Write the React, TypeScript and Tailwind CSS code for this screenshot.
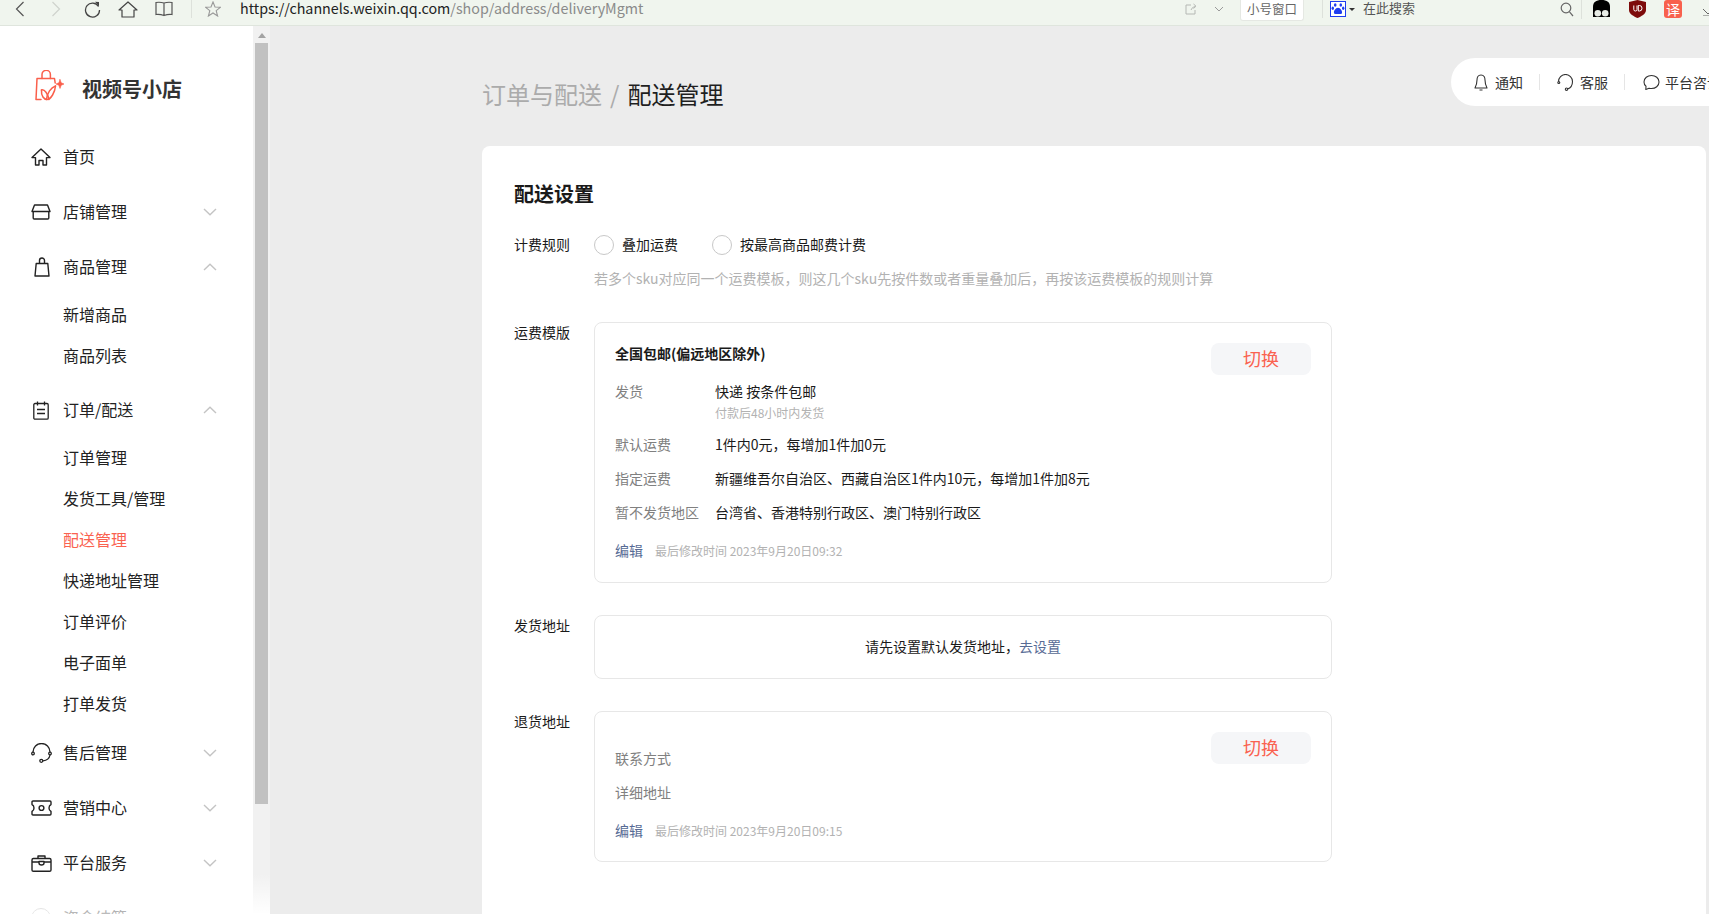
import React from "react";

const Back = ({ color = "#555" }: { color?: string }) => (
  <svg width="10" height="16" viewBox="0 0 10 16" fill="none" stroke={color} strokeWidth="1.2">
    <path d="M8.5 1 L1.5 8 L8.5 15" />
  </svg>
);

const Forward = () => (
  <svg width="10" height="16" viewBox="0 0 10 16" fill="none" stroke="#cfd3cd" strokeWidth="1.2">
    <path d="M1.5 1 L8.5 8 L1.5 15" />
  </svg>
);

const Chevron = ({ up }: { up?: boolean }) => (
  <svg width="14" height="8" viewBox="0 0 14 8" fill="none" stroke="#c4c4c4" strokeWidth="1.4">
    <path d={up ? "M1 7 L7 1.2 L13 7" : "M1 1 L7 6.8 L13 1"} />
  </svg>
);

const HomeIcon = () => (
  <svg width="20" height="18" viewBox="0 0 20 18" fill="none" stroke="#222" strokeWidth="1.4" strokeLinejoin="round">
    <path d="M10 1 L19 9.6 H15.5 V17 H12 V12.5 H8 V17 H4.5 V9.6 H1 Z" />
  </svg>
);

const StoreIcon = () => (
  <svg width="20" height="16" viewBox="0 0 20 16" fill="none" stroke="#222" strokeWidth="1.4" strokeLinejoin="round">
    <path d="M3.5 1 H16.5 L19 7.5 H1 Z" />
    <path d="M2.2 7.5 V14 Q2.2 15 3.2 15 H16.8 Q17.8 15 17.8 14 V7.5" />
  </svg>
);

const BagIcon = () => (
  <svg width="16" height="20" viewBox="0 0 16 20" fill="none" stroke="#222" strokeWidth="1.4" strokeLinejoin="round">
    <path d="M2.2 6.5 H13.8 L15 19 H1 Z" />
    <path d="M5.5 6.5 V3.5 a2.5 2.5 0 0 1 5 0 V6.5" />
  </svg>
);

const OrderIcon = () => (
  <svg width="16" height="19" viewBox="0 0 16 19" fill="none" stroke="#222" strokeWidth="1.3">
    <rect x="0.8" y="2.5" width="14.4" height="15.7" rx="1.2" />
    <path d="M4.5 0.5 V4.5 M11.5 0.5 V4.5 M4 8.5 H12 M4 12.5 H12" />
  </svg>
);

const HeadsetIcon = () => (
  <svg width="21" height="20" viewBox="0 0 21 20" fill="none" stroke="#222" strokeWidth="1.3">
    <path d="M2 9 a8.5 8.5 0 0 1 17 0" />
    <circle cx="2" cy="10.5" r="1.3" />
    <circle cx="19" cy="10.5" r="1.3" />
    <path d="M19 12 Q18 17.5 12 17.8" />
    <circle cx="10.3" cy="17.8" r="1.5" />
  </svg>
);

const TicketIcon = () => (
  <svg width="21" height="16" viewBox="0 0 21 16" fill="none" stroke="#222" strokeWidth="1.4" strokeLinejoin="round">
    <path d="M2 1 H19 Q20 1 20 2 V4.5 Q18 5.5 18 8 Q18 10.5 20 11.5 V14 Q20 15 19 15 H2 Q1 15 1 14 V11.5 Q3 10.5 3 8 Q3 5.5 1 4.5 V2 Q1 1 2 1 Z" />
    <circle cx="10.5" cy="8" r="2.4" />
  </svg>
);

const CaseIcon = () => (
  <svg width="21" height="17" viewBox="0 0 21 17" fill="none" stroke="#222" strokeWidth="1.4" strokeLinejoin="round">
    <rect x="1" y="3.5" width="19" height="12.8" rx="1.4" />
    <path d="M7 3.5 V1 H14 V3.5 M1 7 H8 M13 7 H20" />
    <path d="M8 6.5 H13 V8 Q13 10 10.5 10 Q8 10 8 8 Z" />
  </svg>
);

const Logo = () => (
  <svg width="31" height="31" viewBox="0 0 31 31" fill="none" stroke="#fa5f4b" strokeWidth="1.5" strokeLinejoin="round" strokeLinecap="round">
    <path d="M8 8.5 V4.5 a4.2 4.2 0 0 1 8.4 0 V8.5" />
    <path d="M3 8.5 H20.5 L21.2 13 M2 29.5 L3 8.5 M2 29.5 H7" />
    <path d="M7.5 20 C7 26 10 29.5 13 29.5 C17 29.5 21 22 21.5 16" />
    <path d="M7.5 20 C10.5 19 14 24 15 29.5" />
    <path d="M21.5 16 C17 17.5 13 23 12.5 29.5" />
    <path fill="#fa5f4b" d="M26 9.5 L27.2 12.8 L30 14 L27.2 15.2 L26 18.5 L24.8 15.2 L22 14 L24.8 12.8 Z" strokeWidth="0.6" />
  </svg>
);

function NavRow({ icon, label, arrow }: { icon: React.ReactNode; label: string; arrow?: "up" | "down" }) {
  return (
    <div className="flex h-[55px] items-center pl-[31px] text-[16px] text-[#222]">
      <div className="mt-[2px] flex w-[32px] items-center">{icon}</div>
      <span className="flex-1">{label}</span>
      {arrow && (
        <div className="mr-[36px] mt-[1px] flex">
          <Chevron up={arrow === "up"} />
        </div>
      )}
    </div>
  );
}

function SubRow({ label, active }: { label: string; active?: boolean }) {
  return (
    <div className={`flex h-[41px] items-center pl-[63px] text-[16px] ${active ? "text-[#fa6250]" : "text-[#222]"}`}>
      {label}
    </div>
  );
}

function Sidebar() {
  return (
    <aside className="relative h-full w-[253px] shrink-0 overflow-hidden bg-white">
      <div className="flex h-[102.5px] items-center gap-[17px] pl-[34px] pt-[23px]">
        <div className="-mt-[6px] flex">
          <Logo />
        </div>
        <span className="text-[20px] font-bold text-[#333]">视频号小店</span>
      </div>
      <NavRow icon={<HomeIcon />} label="首页" />
      <NavRow icon={<StoreIcon />} label="店铺管理" arrow="down" />
      <NavRow icon={<div className="ml-[3px] flex"><BagIcon /></div>} label="商品管理" arrow="up" />
      <div className="pb-[6px]">
        <SubRow label="新增商品" />
        <SubRow label="商品列表" />
      </div>
      <NavRow icon={<div className="ml-[2px] flex"><OrderIcon /></div>} label="订单/配送" arrow="up" />
      <div className="pb-[1px]">
        <SubRow label="订单管理" />
        <SubRow label="发货工具/管理" />
        <SubRow label="配送管理" active />
        <SubRow label="快递地址管理" />
        <SubRow label="订单评价" />
        <SubRow label="电子面单" />
        <SubRow label="打单发货" />
      </div>
      <NavRow icon={<HeadsetIcon />} label="售后管理" arrow="down" />
      <NavRow icon={<TicketIcon />} label="营销中心" arrow="down" />
      <NavRow icon={<CaseIcon />} label="平台服务" arrow="down" />
      <NavRow
        icon={<div className="h-[20px] w-[20px] rounded-full border border-[#bbb]" />}
        label="资金结算"
        arrow="down"
      />
      <div className="absolute inset-x-0 bottom-0 h-[40px] bg-gradient-to-b from-white/0 to-white/70" />
    </aside>
  );
}

function Scrollbar() {
  return (
    <div className="relative flex h-full w-[17px] shrink-0 flex-col items-center bg-[#f1f1f1]">
      <div className="mt-[7px] h-0 w-0 border-x-[4px] border-b-[5px] border-x-transparent border-b-[#a3a3a3]" />
      <div className="mt-[5px] h-[761px] w-[13px] bg-[#c1c1c1]" />
      <div className="absolute inset-x-0 bottom-0 h-[40px] bg-gradient-to-b from-white/0 to-white" />
    </div>
  );
}

function TopBar() {
  return (
    <header className="flex h-[26px] shrink-0 items-start justify-between overflow-hidden border-b border-[#dfe5dd] bg-[#f0f5ee]">
      <div className="flex h-[18px] items-center">
        <div className="ml-[15px] flex"><Back /></div>
        <div className="ml-[26px] flex"><Forward /></div>
        <svg className="ml-[23px]" width="17" height="17" viewBox="0 0 17 17" fill="none" stroke="#444" strokeWidth="1.3">
          <path d="M14.5 5.5 A7 7 0 1 0 15.5 9" />
          <path d="M11 0.8 L15 1 L15 5.6 Z" fill="#444" stroke="none" />
        </svg>
        <svg className="ml-[17px]" width="20" height="17" viewBox="0 0 20 17" fill="none" stroke="#444" strokeWidth="1.2">
          <path d="M10 1 L19 9 H16 V16 H4 V9 H1 Z" strokeLinejoin="round" />
        </svg>
        <svg className="ml-[17px]" width="18" height="16" viewBox="0 0 18 16" fill="none" stroke="#555" strokeWidth="1.2">
          <path d="M9 2 Q5 0.8 1 1.5 V13.5 Q5 13 9 14.5 Q13 13 17 13.5 V1.5 Q13 0.8 9 2 Z M9 2 V14.5" />
        </svg>
        <div className="ml-[18px] h-[18px] w-px bg-[#dde1db]" />
        <svg className="ml-[13px]" width="16" height="16" viewBox="0 0 16 16" fill="none" stroke="#999" strokeWidth="1.1">
          <path d="M8 1 L10 6 L15.3 6.3 L11.2 9.7 L12.6 15 L8 12 L3.4 15 L4.8 9.7 L0.7 6.3 L6 6 Z" />
        </svg>
        <div className="ml-[19px] whitespace-nowrap pb-[2px] text-[14.3px]">
          <span className="text-[#222]">https://channels.weixin.qq.com</span>
          <span className="text-[#8a8a8a]">/shop/address/deliveryMgmt</span>
        </div>
      </div>
      <div className="flex h-[18px] items-center">
        <svg width="12" height="12" viewBox="0 0 12 12" fill="none" stroke="#b5b8b4" strokeWidth="1">
          <path d="M6 2 H1 V11 H10 V7 M6 7 Q7 4 10 3.5 M8.5 1 L11 3.2 L8.5 5.5" />
        </svg>
        <svg className="ml-[17px]" width="10" height="6" viewBox="0 0 10 6" fill="none" stroke="#9a9a9a" strokeWidth="1">
          <path d="M1 1 L5 5 L9 1" />
        </svg>
        <div className="ml-[16px] flex h-[21px] w-[64px] items-center justify-center self-start rounded-b-[3px] border border-t-0 border-[#e5e8e3] bg-white pb-[2px] text-[12.5px] text-[#666]">
          小号窗口
        </div>
        <div className="ml-[18px] h-[18px] w-px bg-[#dde1db]" />
        <svg className="ml-[7px]" width="16" height="16" viewBox="0 0 16 16">
          <rect x="0.5" y="0.5" width="15" height="15" fill="#fff" stroke="#1e3cf0" />
          <g fill="#1e3cf0">
            <ellipse cx="5.2" cy="4" rx="1.3" ry="1.8" />
            <ellipse cx="10.8" cy="4" rx="1.3" ry="1.8" />
            <ellipse cx="2.8" cy="7.3" rx="1.2" ry="1.7" />
            <ellipse cx="13.2" cy="7.3" rx="1.2" ry="1.7" />
            <path d="M8 6.8 C10.5 7 12.5 10 12 12 C11.5 13.6 9.5 13 8 13 C6.5 13 4.5 13.6 4 12 C3.5 10 5.5 7 8 6.8 Z" />
          </g>
        </svg>
        <div className="ml-[3px] h-0 w-0 border-x-[3px] border-t-[3px] border-x-transparent border-t-[#333]" />
        <span className="ml-[8px] w-[198px] whitespace-nowrap pb-[2px] text-[13px] text-[#555]">在此搜索</span>
        <svg className="-ml-[1px]" width="14" height="15" viewBox="0 0 14 15" fill="none" stroke="#666" strokeWidth="1.2">
          <circle cx="6" cy="6" r="4.8" />
          <path d="M9.5 9.8 L13 14" />
        </svg>
        <div className="ml-[7px] h-[20px] w-px bg-[#dde1db]" />
        <svg className="ml-[11px]" width="17" height="18" viewBox="0 0 17 18">
          <path d="M0 17 V7 C0 2 3 0 8.5 0 C14 0 17 2 17 7 V17 Z" fill="#000" />
          <circle cx="4.8" cy="13.3" r="3.3" fill="#e8ece6" />
          <circle cx="12.2" cy="13.3" r="3.3" fill="#e8ece6" />
        </svg>
        <svg className="ml-[19px]" width="17" height="18" viewBox="0 0 17 18">
          <path d="M0 2 L8.5 0 L17 2 V10 C17 14 12 16.5 8.5 18 C5 16.5 0 14 0 10 Z" fill="#7d0b0b" />
          <path d="M4.8 5.5 V9.5 Q4.8 11 6.5 11 Q8 11 8 9.5 V5.5 M9.3 5.5 V11 H10.5 Q13 11 13 8.2 Q13 5.5 10.5 5.5 Z" fill="none" stroke="#fff" strokeWidth="1" />
        </svg>
        <div className="ml-[18px] flex h-[18px] w-[18px] items-center justify-center rounded-[3px] bg-[#f8614d] text-[14px] text-white">
          译
        </div>
        <svg className="ml-[21px]" width="6" height="14" viewBox="0 0 6 14" fill="none" stroke="#666" strokeWidth="1">
          <path d="M0 7 L5 12 L10 7 M0 14 H10" />
        </svg>
      </div>
    </header>
  );
}

function Label({ text }: { text: string }) {
  return <div className="flex h-[22px] w-[80px] shrink-0 items-center pb-[2px] text-[14px] text-[#1a1a1a]">{text}</div>;
}

function Radio({ text }: { text: string }) {
  return (
    <div className="flex items-center gap-[8px] pb-[2px] text-[14px] text-[#1a1a1a]">
      <div className="h-[20px] w-[20px] rounded-full border border-[#c8c8c8]" />
      {text}
    </div>
  );
}

function SwitchButton() {
  return (
    <div className="flex h-[32px] w-[100px] shrink-0 items-center justify-center rounded-[8px] bg-[#f5f6f8] pb-[2px] text-[18px] text-[#fa6250]">
      切换
    </div>
  );
}

function InfoRow({ name, value, className }: { name: string; value?: string; className?: string }) {
  return (
    <div className={`flex h-[22px] items-center pb-[2px] text-[14px] ${className ?? ""}`}>
      <span className="w-[100px] shrink-0 whitespace-nowrap text-[#808080]">{name}</span>
      <span className="text-[#1a1a1a]">{value}</span>
    </div>
  );
}

function EditLine({ time }: { time: string }) {
  return (
    <div className="mt-[16px] flex h-[22px] items-center gap-[12px]">
      <span className="pb-[2px] text-[14px] text-[#576b95]">编辑</span>
      <span className="text-[12px] text-[#b2b2b2]">最后修改时间 {time}</span>
    </div>
  );
}

function Main() {
  return (
    <main className="relative h-full flex-1 overflow-hidden bg-[#ececec] pl-[212px] pr-[3px]">
      <div className="flex h-[120px] items-start gap-[8px] pt-[50px] text-[24px] leading-[36px] text-[#1f1f1f]">
        <span className="text-[#ababab]">订单与配送</span>
        <span className="text-[#ababab]">/</span>
        <span>配送管理</span>
      </div>

      <div className="absolute right-0 top-[32px] h-[48px] w-[258px] overflow-hidden rounded-l-[24px] bg-white pl-[23px] text-[14px] text-[#333]">
        <div className="flex h-full w-max items-center whitespace-nowrap">
          <svg width="14" height="17" viewBox="0 0 14 17" fill="none" stroke="#333" strokeWidth="1.1" strokeLinejoin="round">
            <path d="M7 1 C4 1 3 3.5 3 6 C3 10 2 12 1 14 H13 C12 12 11 10 11 6 C11 3.5 10 1 7 1 Z" />
            <path d="M5.5 16 H8.5" />
          </svg>
          <span className="ml-[7px]">通知</span>
          <div className="ml-[16px] h-[16px] w-px bg-[#e5e5e5]" />
          <svg className="ml-[17px]" width="17" height="17" viewBox="0 0 17 17" fill="none" stroke="#333" strokeWidth="1.1">
            <path d="M1.5 7.5 a7 7 0 0 1 14 0 Q15.5 13.5 10.5 15" />
            <circle cx="1.8" cy="8.5" r="1" />
            <circle cx="9.5" cy="15.2" r="1.2" />
          </svg>
          <span className="ml-[6px]">客服</span>
          <div className="ml-[16px] h-[16px] w-px bg-[#e5e5e5]" />
          <svg className="ml-[18px]" width="17" height="17" viewBox="0 0 17 17" fill="none" stroke="#333" strokeWidth="1.1" strokeLinejoin="round">
            <path d="M8.5 1.5 C4.5 1.5 1 4 1 8 C1 10 2 11.5 3 12.3 L2.8 15.5 L6 14.2 C6.8 14.4 7.6 14.5 8.5 14.5 C12.5 14.5 16 12 16 8 C16 4 12.5 1.5 8.5 1.5 Z" />
          </svg>
          <span className="ml-[5px]">平台咨询</span>
        </div>
      </div>

      <div className="h-[800px] rounded-t-[8px] bg-white px-[32px] pt-[34px]">
        <h2 className="flex h-[28px] items-center text-[20px] font-bold text-[#1a1a1a]">配送设置</h2>

        <div className="mt-[26px] flex items-center">
          <Label text="计费规则" />
          <div className="flex gap-[34px]">
            <Radio text="叠加运费" />
            <Radio text="按最高商品邮费计费" />
          </div>
        </div>
        <div className="ml-[80px] mt-[12px] flex h-[20px] items-center pb-[2px] text-[14px] text-[#b2b2b2]">
          若多个sku对应同一个运费模板，则这几个sku先按件数或者重量叠加后，再按该运费模板的规则计算
        </div>

        <div className="mt-[33px] flex">
          <Label text="运费模版" />
          <div className="flex h-[261px] w-[738px] justify-between rounded-[8px] border border-[#e7e7e7] px-[20px] pt-[20px]">
            <div>
              <div className="flex h-[22px] items-center pb-[2px] text-[14px] font-bold text-[#1a1a1a]">全国包邮(偏远地区除外)</div>
              <InfoRow className="mt-[16px]" name="发货" value="快递 按条件包邮" />
              <div className="flex h-[20px] items-center pl-[100px] text-[12px] text-[#b2b2b2]">付款后48小时内发货</div>
              <InfoRow className="mt-[11px]" name="默认运费" value="1件内0元，每增加1件加0元" />
              <InfoRow className="mt-[12px]" name="指定运费" value="新疆维吾尔自治区、西藏自治区1件内10元，每增加1件加8元" />
              <InfoRow className="mt-[12px]" name="暂不发货地区" value="台湾省、香港特别行政区、澳门特别行政区" />
              <EditLine time="2023年9月20日09:32" />
            </div>
            <SwitchButton />
          </div>
        </div>

        <div className="mt-[32px] flex">
          <Label text="发货地址" />
          <div className="flex h-[64px] w-[738px] items-center justify-center rounded-[8px] border border-[#e7e7e7] pb-[2px] text-[14px] text-[#1a1a1a]">
            请先设置默认发货地址，<span className="text-[#576b95]">去设置</span>
          </div>
        </div>

        <div className="mt-[32px] flex">
          <Label text="退货地址" />
          <div className="flex h-[151px] w-[738px] justify-between rounded-[8px] border border-[#e7e7e7] px-[20px] pt-[20px]">
            <div className="pt-[16px]">
              <InfoRow name="联系方式" />
              <InfoRow className="mt-[12px]" name="详细地址" />
              <EditLine time="2023年9月20日09:15" />
            </div>
            <SwitchButton />
          </div>
        </div>
      </div>
    </main>
  );
}

export default function App() {
  return (
    <div className="flex h-screen w-full flex-col overflow-hidden bg-white font-['Noto_Sans_CJK_SC','Noto_Sans',sans-serif]">
      <TopBar />
      <div className="flex min-h-0 flex-1">
        <Sidebar />
        <Scrollbar />
        <Main />
      </div>
    </div>
  );
}
